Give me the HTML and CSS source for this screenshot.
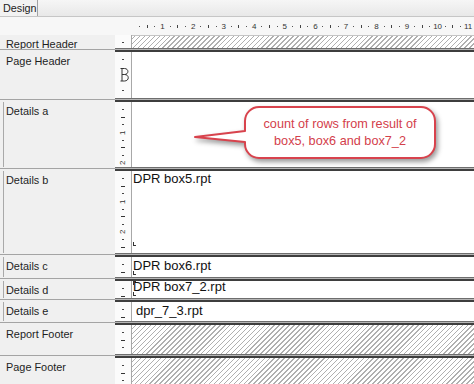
FILE: index.html
```html
<!DOCTYPE html>
<html>
<head>
<meta charset="utf-8">
<link rel="stylesheet" href="styles.css">
</head>
<body>
<div class="app">
  <div class="tabbar"><div class="tab">Design</div></div>
  <div class="toprow">
    <div class="corner"></div>
    <div class="hruler">
      <i class="d"></i><i class="t"></i><i class="d"></i><b>1</b>
      <i class="d"></i><i class="t"></i><i class="d"></i><b>2</b>
      <i class="d"></i><i class="t"></i><i class="d"></i><b>3</b>
      <i class="d"></i><i class="t"></i><i class="d"></i><b>4</b>
      <i class="d"></i><i class="t"></i><i class="d"></i><b>5</b>
      <i class="d"></i><i class="t"></i><i class="d"></i><b>6</b>
      <i class="d"></i><i class="t"></i><i class="d"></i><b>7</b>
      <i class="d"></i><i class="t"></i><i class="d"></i><b>8</b>
      <i class="d"></i><i class="t"></i><i class="d"></i><b>9</b>
      <i class="d"></i><i class="t"></i><i class="d"></i><b>10</b>
      <i class="d"></i><i class="t"></i><i class="d"></i><b>11</b>
    </div>
  </div>

  <div class="section h-rh">
    <div class="label">Report Header</div>
    <div class="vruler"><i class="d"></i></div>
    <div class="canvas hatch framed"></div>
  </div>
  <div class="sep"><div class="sep-l"></div><div class="sep-r"></div></div>

  <div class="section h-ph">
    <div class="label">Page Header</div>
    <div class="vruler">
      <i class="d"></i>
      <span class="bmark"><svg width="10" height="16" viewBox="0 0 10 16"><path d="M0.5 1.5 H4.5 C9 1.5 9 7.5 4.5 7.5 H2 M4.5 7.5 C9.5 7.5 9.5 14 4.5 14 H0.5 M2 1.5 V14" stroke="#333" stroke-width="1" fill="none"/></svg></span>
      <i class="d"></i>
    </div>
    <div class="canvas"></div>
  </div>
  <div class="sep"><div class="sep-l"></div><div class="sep-r"></div></div>

  <div class="section h-da">
    <div class="label det">Details a</div>
    <div class="vruler">
      <i class="d"></i><i class="t"></i><i class="d"></i><b>1</b>
      <i class="d"></i><i class="t"></i><i class="d"></i><b>2</b>
    </div>
    <div class="canvas">
      <div class="callout">
        <svg class="callout-shape" width="254" height="60" viewBox="0 0 254 60"><path d="M69 3 H231 A14 14 0 0 1 245 17 V40 A14 14 0 0 1 231 54 H69 A14 14 0 0 1 55 40 V38 L5 33 L55 27 V17 A14 14 0 0 1 69 3 Z" fill="#fff" stroke="#d8434d" stroke-width="2" stroke-linejoin="round"/></svg>
        <div class="callout-text">count of rows from result of<br>box5, box6 and box7_2</div>
      </div>
    </div>
  </div>
  <div class="sep"><div class="sep-l"></div><div class="sep-r"></div></div>

  <div class="section h-db">
    <div class="label det">Details b</div>
    <div class="vruler">
      <i class="d"></i><i class="t"></i><i class="d"></i><b>1</b>
      <i class="d"></i><i class="t"></i><i class="d"></i><b>2</b>
      <i class="d"></i><i class="t"></i>
    </div>
    <div class="canvas"><div class="obj">DPR box5.rpt</div><span class="cm cm-b"></span></div>
  </div>
  <div class="sep"><div class="sep-l"></div><div class="sep-r"></div></div>

  <div class="section h-dc">
    <div class="label det">Details c</div>
    <div class="vruler"><i class="d"></i><i class="t"></i></div>
    <div class="canvas"><div class="obj pc">DPR box6.rpt</div><span class="cm cm-c"></span></div>
  </div>
  <div class="sep"><div class="sep-l"></div><div class="sep-r"></div></div>

  <div class="section h-dd">
    <div class="label det">Details d</div>
    <div class="vruler"><i class="d"></i><i class="t"></i></div>
    <div class="canvas"><span class="cm cm-dt"></span><div class="obj pd">DPR box7_2.rpt</div><span class="cm cm-c"></span></div>
  </div>
  <div class="sep"><div class="sep-l"></div><div class="sep-r"></div></div>

  <div class="section h-de">
    <div class="label det">Details e</div>
    <div class="vruler"><i class="d"></i><i class="t"></i></div>
    <div class="canvas"><div class="obj pe">dpr_7_3.rpt</div></div>
  </div>
  <div class="sep"><div class="sep-l"></div><div class="sep-r"></div></div>

  <div class="section h-rf">
    <div class="label">Report Footer</div>
    <div class="vruler"><i class="d"></i><i class="t"></i><i class="d"></i></div>
    <div class="canvas hatch"></div>
  </div>
  <div class="sep"><div class="sep-l"></div><div class="sep-r"></div></div>

  <div class="section h-pf">
    <div class="label">Page Footer</div>
    <div class="vruler"><i class="d"></i><i class="t"></i><i class="d"></i></div>
    <div class="canvas hatch"></div>
  </div>
</div>
</body>
</html>
```

FILE: styles.css
```css
html, body {
  margin: 0;
  padding: 0;
}
body {
  width: 474px;
  height: 384px;
  overflow: hidden;
  background: #f0f0f0;
  font-family: "Liberation Sans", Arial, sans-serif;
  color: #1a1a1a;
}
.app {
  display: flex;
  flex-direction: column;
  width: 474px;
}

/* tab bar */
.tabbar {
  height: 16px;
  display: flex;
  border-bottom: 1px solid #c6c6c6;
  background: linear-gradient(#f6f6f6, #e8e8e8);
}
.tab {
  width: 38px;
  box-sizing: border-box;
  border-right: 1px solid #a2a2a2;
  background: #f2f2f2;
  font-size: 10.8px;
  line-height: 12px;
  padding: 2px 0 0 3px;
  color: #222;
}

/* top ruler */
.toprow {
  height: 18px;
  display: flex;
  background: #f7f7f7;
}
.corner {
  width: 132px;
  flex: none;
}
.hruler {
  display: flex;
  padding-left: 3.8px;
  align-items: center;
  overflow: hidden;
  flex: 1;
}
.hruler > i, .hruler > b {
  flex: none;
  width: 7.65px;
  height: 18px;
  display: flex;
  align-items: center;
  justify-content: center;
  font-style: normal;
  font-weight: normal;
  font-size: 8px;
  color: #333;
}
.hruler > i.d::before {
  content: "";
  width: 1px;
  height: 1px;
  background: #555;
}
.hruler > i.t::before {
  content: "";
  width: 1px;
  height: 3px;
  background: #444;
}

/* sections */
.section {
  display: flex;
  flex: none;
}
.h-rh { height: 13px; }
.h-ph { height: 46px; }
.h-da { height: 65px; }
.h-db { height: 82px; }
.h-dc { height: 20px; }
.h-dd { height: 17px; }
.h-de { height: 19px; }
.h-rf { height: 29px; }
.h-pf { height: 40px; }

.label {
  width: 115px;
  flex: none;
  box-sizing: border-box;
  padding: 3px 0 0 6px;
  font-size: 10.9px;
  line-height: 12px;
  color: #1e1e1e;
  white-space: nowrap;
}
.label.det {
  margin-left: 3px;
  width: 112px;
  border-left: 1px solid #a9a9a9;
  padding-left: 2px;
}

.vruler {
  width: 17px;
  flex: none;
  box-sizing: border-box;
  border-right: 1px solid #a8a8a8;
  background: #fbfbfb;
  display: flex;
  flex-direction: column;
  align-items: center;
  padding-top: 3.8px;
  overflow: hidden;
}
.vruler > i, .vruler > b {
  flex: none;
  height: 7.65px;
  width: 16px;
  display: flex;
  align-items: center;
  justify-content: center;
  font-style: normal;
  font-weight: normal;
  font-size: 8px;
  color: #333;
}
.vruler > b {
  transform: rotate(-90deg);
}
.vruler > i.d::before {
  content: "";
  width: 2px;
  height: 1px;
  background: #444;
}
.vruler > i.t::before {
  content: "";
  width: 4px;
  height: 1px;
  background: #333;
}
.bmark {
  flex: none;
  height: 22.95px;
  width: 16px;
  display: flex;
  align-items: center;
  justify-content: center;
  padding-left: 4px;
  box-sizing: border-box;
}
.bmark svg { display: block; }

.canvas {
  flex: 1;
  background: #fff;
  position: relative;
}
.hatch {
  background: repeating-linear-gradient(135deg, #fff 0 2.4px, #b0b0b0 2.4px 3.5px);
}
.framed {
  box-shadow: inset 0 1px #c4c4c4;
}

/* separators */
.sep {
  display: flex;
  height: 4px;
  flex: none;
}
.sep-l {
  width: 115px;
  flex: none;
  background: linear-gradient(transparent 1.5px, #a4a4a4 1.5px 2.5px, transparent 2.5px);
}
.sep-r {
  flex: 1;
  box-sizing: border-box;
  border-top: 1px solid #6e6e6e;
  background: #b6b6b6;
  border-bottom: 2px solid #3e3e3e;
}

/* report objects */
.obj {
  font-size: 13px;
  line-height: 13px;
  color: #111;
  padding: 0.5px 0 0 1px;
  white-space: nowrap;
}
.obj.pc { padding-top: 1.5px; }
.obj.pd { padding-top: 0; margin-top: -1px; }
.obj.pe { padding: 2px 0 0 4px; }

.cm {
  position: absolute;
  left: 1px;
  width: 2px;
  height: 3px;
  border-left: 1px solid #333;
  border-bottom: 1px solid #333;
}
.cm-b { bottom: 7px; }
.cm-c { bottom: 2px; }
.cm-dt { top: 0; border-bottom: none; border-top: 1px solid #333; }

/* callout */
.callout {
  position: absolute;
  left: 58px;
  top: 2px;
  width: 254px;
  height: 60px;
}
.callout-shape {
  position: absolute;
  left: 0;
  top: 0;
  filter: drop-shadow(2px 3px 2.5px rgba(0, 0, 0, 0.4));
}
.callout-text {
  position: absolute;
  left: 55px;
  top: 3px;
  width: 190px;
  height: 51px;
  display: flex;
  align-items: center;
  justify-content: center;
  text-align: center;
  font-size: 12.7px;
  line-height: 17px;
  color: #d3404b;
}
```
